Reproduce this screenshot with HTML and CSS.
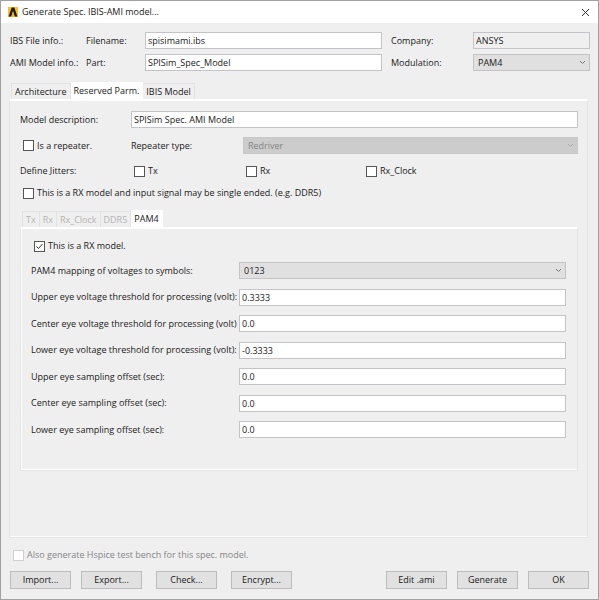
FILE: index.html
```html
<!DOCTYPE html>
<html lang="en">
<head>
<meta charset="utf-8">
<title>Generate Spec. IBIS-AMI model...</title>
<link rel="stylesheet" href="styles.css">
</head>
<body>
<main class="dialog">
  <header class="titlebar">
    <svg class="logo" viewBox="0 0 10 10" aria-hidden="true"><rect width="10" height="10" fill="#ffbf1f"/><path d="M3.7 .5h2.6L9.4 9.5H6.800L5 4 3.2 9.5H.6z" fill="#171b22"/><path d="M5 4.200 6.5 9.5h-3z" fill="#e9b53a"/></svg>
    <h1 class="title">Generate Spec. IBIS-AMI model...</h1>
    <button class="close" aria-label="Close"><svg viewBox="0 0 9 9"><path d="M1 1l7 7M8 1l-7 7"/></svg></button>
  </header>

  <section class="info">
    <span>IBS File info.:</span>
    <label for="filename">Filename:</label>
    <input class="field" id="filename" type="text" value="spisimami.ibs">
    <label class="right-label" for="company">Company:</label>
    <input class="field readonly" id="company" type="text" value="ANSYS" readonly>
    <span>AMI Model info.:</span>
    <label for="part">Part:</label>
    <input class="field" id="part" type="text" value="SPISim_Spec_Model">
    <label class="right-label" for="modulation">Modulation:</label>
    <div class="combo">
      <select id="modulation"><option>PAM4</option></select>
      <svg class="arrow" viewBox="0 0 7 5"><path d="M1 1l2.500 2.500L6 1"/></svg>
    </div>
  </section>

  <nav class="tabs main-tabs">
    <button class="tab">Architecture</button>
    <button class="tab active">Reserved Parm.</button>
    <button class="tab">IBIS Model</button>
  </nav>

  <section class="panel main-panel">
    <div class="row description">
      <label for="desc">Model description:</label>
      <input class="field" id="desc" type="text" value="SPISim Spec. AMI Model">
    </div>
    <div class="row repeater">
      <label class="check"><input type="checkbox">Is a repeater.</label>
      <label for="rtype">Repeater type:</label>
      <div class="combo disabled">
        <select id="rtype" disabled><option>Redriver</option></select>
        <svg class="arrow" viewBox="0 0 7 5"><path d="M1 1l2.500 2.500L6 1"/></svg>
      </div>
    </div>
    <div class="row jitters">
      <span>Define Jitters:</span>
      <label class="check"><input type="checkbox">Tx</label>
      <label class="check"><input type="checkbox">Rx</label>
      <label class="check"><input type="checkbox">Rx_Clock</label>
    </div>
    <div class="row single">
      <label class="check"><input type="checkbox">This is a RX model and input signal may be single ended. (e.g. DDR5)</label>
    </div>

    <nav class="tabs sub-tabs">
      <button class="tab" disabled>Tx</button>
      <button class="tab" disabled>Rx</button>
      <button class="tab" disabled>Rx_Clock</button>
      <button class="tab" disabled>DDR5</button>
      <button class="tab active">PAM4</button>
    </nav>
    <section class="panel sub-panel">
      <label class="check"><input type="checkbox" checked>This is a RX model.</label>
      <div class="params">
        <label for="map">PAM4 mapping of voltages to symbols:</label>
        <div class="combo">
          <select id="map"><option>0123</option></select>
          <svg class="arrow" viewBox="0 0 7 5"><path d="M1 1l2.500 2.500L6 1"/></svg>
        </div>
        <label for="uv">Upper eye voltage threshold for processing (volt):</label>
        <input class="field" id="uv" type="text" value="0.3333">
        <label for="cv">Center eye voltage threshold for processing (volt)</label>
        <input class="field" id="cv" type="text" value="0.0">
        <label for="lv">Lower eye voltage threshold for processing (volt):</label>
        <input class="field" id="lv" type="text" value="-0.3333">
        <label for="us">Upper eye sampling offset (sec):</label>
        <input class="field" id="us" type="text" value="0.0">
        <label for="cs">Center eye sampling offset (sec):</label>
        <input class="field" id="cs" type="text" value="0.0">
        <label for="ls">Lower eye sampling offset (sec):</label>
        <input class="field" id="ls" type="text" value="0.0">
      </div>
    </section>
  </section>

  <footer class="footer">
    <label class="check muted"><input type="checkbox" disabled>Also generate Hspice test bench for this spec. model.</label>
    <div class="buttons">
      <div class="group files"><button class="btn">Import...</button><button class="btn">Export...</button></div>
      <div class="group tools"><button class="btn">Check...</button><button class="btn">Encrypt...</button></div>
      <div class="group actions"><button class="btn">Edit .ami</button><button class="btn">Generate</button><button class="btn">OK</button></div>
    </div>
  </footer>
</main>
</body>
</html>
```
FILE: styles.css
```css
* { box-sizing: border-box; }

body {
  margin: 0;
  background: #efefef;
  color: #1a1a1a;
  font: 9px/14px "Open Sans", "Noto Sans", sans-serif;
}

button, input, select { font: inherit; color: inherit; margin: 0; }
label, span, button { white-space: nowrap; }

.dialog {
  min-height: 100vh;
  display: flex;
  flex-direction: column;
  border: 1px solid #a0a0a0;
}

.titlebar {
  display: flex;
  align-items: center;
  height: 22px;
  padding: 0 8px 0 7px;
  background: #fff;
}
.logo { width: 10px; height: 10px; }
.title { flex: 1; margin: 0 0 0 4px; font: inherit; }
.close { display: flex; padding: 0; border: 0; background: none; }
.close svg { width: 9px; height: 9px; fill: none; stroke: #333; }

.info {
  display: grid;
  grid-template-columns: 76px 59px minmax(0, 237fr) 91px minmax(0, 117fr);
  grid-auto-rows: 17px;
  row-gap: 5px;
  align-items: center;
  padding: 9px 8px 0 9px;
}
.right-label { padding-left: 9px; }

.field {
  width: 100%;
  min-width: 0;
  height: 17px;
  padding: 0 2px;
  border: 1px solid #c4c4c8;
  border-radius: 0;
  background: #fff;
}
.readonly { background: #efefef; }

.combo { position: relative; height: 17px; }
.combo select {
  width: 100%;
  height: 100%;
  padding: 0 4px;
  appearance: none;
  border: 1px solid #c4c4c4;
  border-radius: 0;
  background: #e0e0e0;
}
.combo.disabled select { border-color: #c8c8c8; background: #ccc; color: #858585; opacity: 1; }
.arrow {
  position: absolute;
  right: 4px;
  top: 6px;
  width: 7px;
  height: 5px;
  fill: none;
  stroke: #777;
}
.disabled .arrow { stroke: #aaa; }

.check { display: flex; align-items: center; gap: 3px; }
.check input {
  appearance: none;
  width: 11px;
  height: 11px;
  border: 1px solid #555;
  background: #fff;
}
.check input:checked {
  background: #fff url("data:image/svg+xml,%3Csvg xmlns='http://www.w3.org/2000/svg' viewBox='0 0 9 9'%3E%3Cpath d='M1.500 4.500l2 2L7.500 2' fill='none' stroke='%23333'/%3E%3C/svg%3E");
}
.check input:disabled { border-color: #d0d0d0; }
.muted { color: #858585; }

.tabs { display: flex; align-items: flex-end; }
.tab {
  height: 16px;
  padding: 0 3px;
  border: 1px solid #e2e2e2;
  border-bottom: 0;
  background: #efefef;
}
.tab + .tab { border-left: 0; }
.tab:disabled { color: #b4b4b4; }
.tab.active { height: 17px; border-color: #fff; background: #fff; }
.panel {
  border: 1px solid #e4e4e4;
  border-top: 2px solid #fff;
  box-shadow: inset 0 -1px #fff;
}

.main-tabs { margin: 11px 10px 0; }
.main-panel {
  flex: 1;
  display: flex;
  flex-direction: column;
  margin: 0 10px 0 8px;
  padding: 10px 9px 0 10px;
}
.row { display: grid; align-items: center; }
.description { grid-template-columns: 111px 1fr; }
.repeater { grid-template-columns: 111px 112px 1fr; margin-top: 9px; }
.jitters { grid-template-columns: 114px 112px 120px 1fr; margin-top: 10px; }
.single { margin-top: 8px; }
.repeater .check, .single .check { margin-left: 3px; }

.sub-tabs { margin: 10px 2px 0; }
.sub-panel {
  display: flex;
  flex-direction: column;
  height: 244px;
  padding: 10px 11px 32px 10px;
  box-shadow: inset 1px -1px #fff;
}
.sub-panel .check { margin-left: 3px; }
.params {
  flex: 1;
  display: grid;
  grid-template-columns: 208px 1fr;
  align-content: space-between;
  align-items: center;
  margin-top: 9px;
}

.footer { padding: 10px 9px; }
.footer .check { margin-left: 3px; }
.buttons { display: flex; gap: 14px; margin-top: 9px; }
.group { display: flex; gap: 10px; }
.tools { gap: 14px; }
.actions { margin-left: auto; }
.btn {
  width: 61px;
  height: 18px;
  padding: 0;
  border: 1px solid #bcbcbc;
  background: #e1e1e1;
}
```
